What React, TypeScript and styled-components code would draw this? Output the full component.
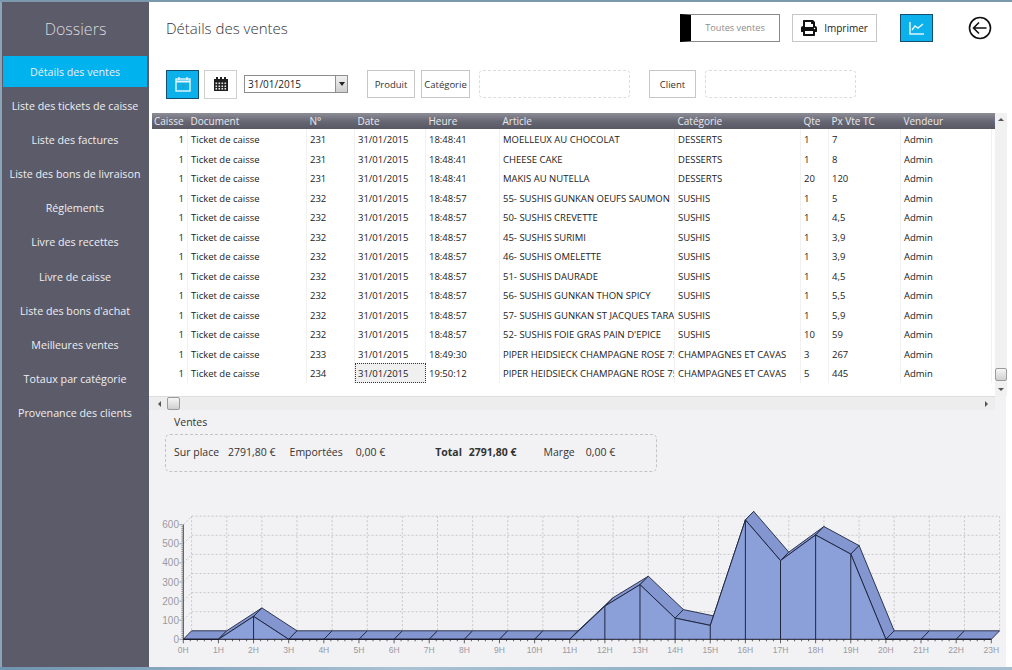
import { createGlobalStyle } from "styled-components";
import styled from "styled-components";
import { FaPrint } from "react-icons/fa";

const navItems = [
  "Détails des ventes",
  "Liste des tickets de caisse",
  "Liste des factures",
  "Liste des bons de livraison",
  "Réglements",
  "Livre des recettes",
  "Livre de caisse",
  "Liste des bons d'achat",
  "Meilleures ventes",
  "Totaux par catégorie",
  "Provenance des clients",
];

const columns = "36px 119px 48px 71px 74px 175px 126px 28px 72px 91px 3px";
const headers = ["Caisse", "Document", "N°", "Date", "Heure", "Article", "Catégorie", "Qte", "Px Vte TC", "Vendeur", "C"];

type Row = [string, string, string, string, string, string, string];

const rows: Row[] = [
  ["231", "18:48:41", "MOELLEUX AU CHOCOLAT", "DESSERTS", "1", "7", "Admin"],
  ["231", "18:48:41", "CHEESE CAKE", "DESSERTS", "1", "8", "Admin"],
  ["231", "18:48:41", "MAKIS AU NUTELLA", "DESSERTS", "20", "120", "Admin"],
  ["232", "18:48:57", "55- SUSHIS GUNKAN OEUFS SAUMON", "SUSHIS", "1", "5", "Admin"],
  ["232", "18:48:57", "50- SUSHIS CREVETTE", "SUSHIS", "1", "4,5", "Admin"],
  ["232", "18:48:57", "45- SUSHIS SURIMI", "SUSHIS", "1", "3,9", "Admin"],
  ["232", "18:48:57", "46- SUSHIS OMELETTE", "SUSHIS", "1", "3,9", "Admin"],
  ["232", "18:48:57", "51- SUSHIS DAURADE", "SUSHIS", "1", "4,5", "Admin"],
  ["232", "18:48:57", "56- SUSHIS GUNKAN THON SPICY", "SUSHIS", "1", "5,5", "Admin"],
  ["232", "18:48:57", "57- SUSHIS GUNKAN ST JACQUES TARAMA", "SUSHIS", "1", "5,9", "Admin"],
  ["232", "18:48:57", "52- SUSHIS FOIE GRAS PAIN D'EPICE", "SUSHIS", "10", "59", "Admin"],
  ["233", "18:49:30", "PIPER HEIDSIECK CHAMPAGNE ROSE 75", "CHAMPAGNES ET CAVAS", "3", "267", "Admin"],
  ["234", "19:50:12", "PIPER HEIDSIECK CHAMPAGNE ROSE 75", "CHAMPAGNES ET CAVAS", "5", "445", "Admin"],
];

const hourValues = [0, 0, 120, 0, 0, 0, 0, 0, 0, 0, 0, 0, 174, 286, 111, 73, 625, 412, 546, 446, 0, 0, 0, 0];

const GlobalStyle = createGlobalStyle`
  html, body {
    margin: 0;
    padding: 0;
    width: 1012px;
    height: 670px;
    overflow: hidden;
    background: #ffffff;
  }
  * {
    box-sizing: border-box;
  }
`;

const Window = styled.div`
  width: 1012px;
  height: 670px;
  display: flex;
  flex-direction: column;
  font-family: "Open Sans", "Noto Sans", sans-serif;
  background: #ffffff;
`;

const TopEdge = styled.div`
  height: 2px;
  background: #7c98ad;
`;

const BottomEdge = styled.div`
  height: 3px;
  background: linear-gradient(90deg, #6f93b0, #a9c2d4 40%, #8fb0c6 70%, #a6c0d2);
`;

const Body = styled.div`
  flex: 1;
  min-height: 0;
  display: flex;
  padding-left: 2px;
  background: #8aa4b8;
`;

const Sidebar = styled.nav`
  width: 147px;
  flex-shrink: 0;
  background: #5b5b69;
  display: flex;
  flex-direction: column;
  align-items: stretch;
`;

const SidebarTitle = styled.div`
  height: 54px;
  padding-top: 15px;
  text-align: center;
  color: #d9d9de;
  font-size: 16px;
  font-weight: 300;
  line-height: 24px;
`;

const NavItem = styled.div<{ $active?: boolean }>`
  height: 31px;
  flex-shrink: 0;
  display: flex;
  align-items: center;
  justify-content: center;
  margin: 0 2px 3.1px 1px;
  padding-top: 1px;
  font-size: 10.7px;
  white-space: nowrap;
  color: #eeeef2;
  background: ${(p) => (p.$active ? "#00b2ee" : "transparent")};
`;

const Main = styled.main`
  flex: 1;
  min-width: 0;
  display: flex;
  flex-direction: column;
  background: #ffffff;
`;

const Header = styled.header`
  height: 54px;
  display: flex;
  align-items: flex-start;
  padding: 12px 20px 0 17px;
`;

const PageTitle = styled.h1`
  margin: 0;
  flex: 1;
  padding-top: 1px;
  font-size: 15px;
  font-weight: 300;
  line-height: 27px;
  color: #333338;
`;

const ToggleButton = styled.div`
  width: 100px;
  height: 28px;
  margin-right: 12px;
  border: 1px solid #8a8a8a;
  border-left: 11px solid #000000;
  display: flex;
  align-items: center;
  justify-content: center;
  padding-bottom: 2px;
  font-size: 9.2px;
  color: #8e8e8e;
`;

const PrintButton = styled.div`
  width: 85px;
  height: 28px;
  margin-right: 23px;
  border: 1px solid #c6c6c6;
  display: flex;
  align-items: center;
  justify-content: center;
  gap: 7px;
  font-size: 10px;
  color: #222222;
`;

const ChartButton = styled.div`
  width: 33px;
  height: 28px;
  margin-right: 35px;
  background: #0cb0ea;
  border: 1px solid #16506e;
  display: flex;
  align-items: center;
  justify-content: center;
`;

const BackIcon = styled.svg`
  width: 24px;
  height: 24px;
  margin-top: 2px;
`;

const FilterRow = styled.div`
  height: 57px;
  display: flex;
  align-items: flex-start;
  padding: 14px 0 0 17px;
`;

const IconButton = styled.div<{ $active?: boolean }>`
  width: 33px;
  height: 29px;
  margin-right: 5px;
  display: flex;
  align-items: center;
  justify-content: center;
  background: ${(p) => (p.$active ? "#0cb0ea" : "#ffffff")};
  border: 1px solid ${(p) => (p.$active ? "#16506e" : "#cfcfcf")};
`;

const DateInput = styled.div`
  width: 104px;
  height: 18px;
  margin: 5px 19px 0 2px;
  border: 1px solid #8e8e8e;
  display: flex;
  align-items: center;
  justify-content: space-between;
  padding-left: 3px;
  font-size: 10px;
  color: #222222;
`;

const DropArrow = styled.span`
  width: 12px;
  height: 16px;
  border-left: 1px solid #8e8e8e;
  background: linear-gradient(#f0f0f0, #cfcfcf);
  display: flex;
  align-items: center;
  justify-content: center;
  &::after {
    content: "";
    border-left: 3px solid transparent;
    border-right: 3px solid transparent;
    border-top: 4px solid #222222;
  }
`;

const FilterButton = styled.div<{ $width: number }>`
  width: ${(p) => p.$width}px;
  height: 28px;
  margin-right: 6px;
  border: 1px solid #c6c6c6;
  display: flex;
  align-items: center;
  justify-content: center;
  font-size: 9.5px;
  color: #333333;
  white-space: nowrap;
`;

const FilterSlot = styled.div<{ $gap: number }>`
  width: 151px;
  height: 28px;
  margin-left: 3px;
  margin-right: ${(p) => p.$gap}px;
  border: 1px dashed #dcdcdc;
  border-radius: 4px;
`;

const TableArea = styled.div`
  height: 283px;
  display: flex;
  padding-left: 3px;
`;

const TableBox = styled.div`
  width: 843px;
  display: flex;
  flex-direction: column;
  overflow: hidden;
`;

const HeaderRow = styled.div`
  height: 16px;
  flex-shrink: 0;
  display: grid;
  grid-template-columns: ${columns};
  background: linear-gradient(#8d8d97, #666673 55%, #585864);
`;

const HeaderCell = styled.div`
  padding: 1px 0 0 2.5px;
  font-size: 10px;
  line-height: 15px;
  color: #e9e9ee;
  white-space: nowrap;
  overflow: hidden;
  &:first-child {
    padding-left: 2px;
  }
`;

const DataRow = styled.div`
  height: 19.5px;
  flex-shrink: 0;
  display: grid;
  grid-template-columns: ${columns};
`;

const Cell = styled.div<{ $right?: boolean; $focused?: boolean }>`
  padding: 1px 3px 0;
  font-size: 9.5px;
  line-height: 19px;
  color: #222222;
  white-space: nowrap;
  overflow: hidden;
  text-align: ${(p) => (p.$right ? "right" : "left")};
  border-right: 1px solid #f1f1f1;
  ${(p) => (p.$focused ? "background: #f0f0f0; outline: 1px dotted #333333; outline-offset: -1px;" : "")}
`;

const VScroll = styled.div`
  width: 12px;
  background: #f1f1f1;
  display: flex;
  flex-direction: column;
  align-items: center;
  justify-content: flex-end;
  padding-bottom: 15px;
  position: relative;
`;

const ScrollArrow = styled.span<{ $dir: "up" | "down" | "left" | "right" }>`
  width: 0;
  height: 0;
  flex-shrink: 0;
  ${(p) =>
    p.$dir === "up"
      ? "border-left: 3px solid transparent; border-right: 3px solid transparent; border-bottom: 3px solid #555;"
      : p.$dir === "down"
        ? "border-left: 3px solid transparent; border-right: 3px solid transparent; border-top: 3px solid #555;"
        : p.$dir === "left"
          ? "border-top: 3px solid transparent; border-bottom: 3px solid transparent; border-right: 3px solid #555;"
          : "border-top: 3px solid transparent; border-bottom: 3px solid transparent; border-left: 3px solid #555;"}
`;

const UpArrow = styled(ScrollArrow)`
  position: absolute;
  top: 5px;
  left: 3px;
`;

const DownArrow = styled(ScrollArrow)`
  position: absolute;
  bottom: 5px;
  left: 3px;
`;

const ScrollThumb = styled.div<{ $wide?: boolean }>`
  width: ${(p) => (p.$wide ? 13 : 12)}px;
  height: 13px;
  flex-shrink: 0;
  border: 1px solid #9b9b9b;
  border-radius: 2px;
  background: linear-gradient(#f6f6f6, #cfcfcf);
`;

const Lower = styled.section`
  flex: 1;
  min-height: 0;
  width: 857px;
  background: #f2f2f5;
  display: flex;
  flex-direction: column;
`;

const HScroll = styled.div`
  height: 14px;
  flex-shrink: 0;
  margin-right: 11px;
  background: #ededed;
  border-top: 1px solid #dddddd;
  display: flex;
  align-items: center;
  padding: 0 0 0 9px;
  gap: 6px;
`;

const HScrollEnd = styled.div`
  flex: 1;
  display: flex;
  justify-content: flex-end;
  padding-right: 7px;
`;

const SalesLabel = styled.div`
  font-size: 10.5px;
  line-height: 14px;
  color: #333333;
  padding: 5px 0 0 25px;
`;

const SalesBox = styled.div`
  width: 492px;
  height: 38px;
  margin: 5px 0 0 16px;
  border: 1px dashed #c4c4c4;
  border-radius: 5px;
  display: flex;
  align-items: center;
  padding: 0 0 2px 8px;
  font-size: 10.5px;
  color: #333333;
  white-space: nowrap;
`;

const SalesText = styled.span<{ $left: number; $bold?: boolean }>`
  margin-left: ${(p) => p.$left}px;
  font-weight: ${(p) => (p.$bold ? 700 : 400)};
`;

const ChartSvg = styled.svg`
  display: block;
  margin-top: 30px;
  width: 857px;
  height: 165px;
`;

// chart coordinates: x0 and baseline are relative to the svg
const X0 = 34.3;
const STEP = 35.13;
const BASE = 137.3;
const UNIT = 19.1 / 100;
const DX = 8.3;
const DY = 8.5;

const px = (h: number) => X0 + h * STEP;
const py = (v: number) => BASE - v * UNIT;

const SalesChart = () => {
  const front = hourValues.map((v, h) => `${px(h).toFixed(1)},${py(v).toFixed(1)}`);
  const back = hourValues.map((v, h) => `${(px(h) + DX).toFixed(1)},${(py(v) - DY).toFixed(1)}`);
  return (
    <ChartSvg viewBox="0 0 857 165">
      {[0, 1, 2, 3, 4, 5, 6].map((i) => (
        <g key={i}>
          <line
            x1={px(0)}
            y1={py(i * 100)}
            x2={px(0) + DX}
            y2={py(i * 100) - DY}
            stroke="#c8c8c8"
            strokeDasharray="2 2"
          />
          {i > 0 && (
            <line
              x1={px(0) + DX}
              y1={py(i * 100) - DY}
              x2={px(23) + DX}
              y2={py(i * 100) - DY}
              stroke="#c8c8c8"
              strokeDasharray="2 2"
            />
          )}
          <text x={30} y={py(i * 100) + 3.5} textAnchor="end" fontSize="10" fill="#9a9aa0" fontFamily="Liberation Sans">
            {i * 100}
          </text>
        </g>
      ))}
      {hourValues.map((_, h) => (
        <line key={h} x1={px(h) + DX} y1={py(600) - DY} x2={px(h) + DX} y2={BASE - DY} stroke="#c8c8c8" strokeDasharray="2 2" />
      ))}
      {/* top and side faces of the 3d area */}
      {hourValues.slice(0, -1).map((_, h) => (
        <polygon
          key={h}
          points={`${front[h]} ${front[h + 1]} ${back[h + 1]} ${back[h]}`}
          fill="#8496d0"
          stroke="#1f2740"
          strokeWidth="0.9"
          strokeLinejoin="round"
        />
      ))}
      <polygon points={`${px(0)},${BASE} ${front.join(" ")} ${px(23)},${BASE}`} fill="#8b9fd8" />
      <polyline points={front.join(" ")} fill="none" stroke="#1f2740" strokeWidth="1" />
      {hourValues.map((v, h) =>
        v > 0 ? <line key={h} x1={px(h)} y1={BASE} x2={px(h)} y2={py(v)} stroke="#1f2740" strokeWidth="1" /> : null
      )}
      <line x1={px(0)} y1={BASE} x2={px(23)} y2={BASE} stroke="#1a1a2a" />
      <line x1={px(0)} y1={py(600)} x2={px(0)} y2={BASE} stroke="#444" />
      {Array.from({ length: 61 }, (_, i) => (
        <line
          key={i}
          x1={px(0) - (i % 10 === 0 ? 4 : 2)}
          y1={BASE - i * 10 * UNIT}
          x2={px(0)}
          y2={BASE - i * 10 * UNIT}
          stroke="#666"
          strokeWidth="0.6"
        />
      ))}
      {Array.from({ length: 23 * 5 + 1 }, (_, i) => (
        <line
          key={i}
          x1={X0 + (i * STEP) / 5}
          y1={BASE}
          x2={X0 + (i * STEP) / 5}
          y2={BASE + (i % 5 === 0 ? 4 : 2)}
          stroke="#222"
          strokeWidth="0.7"
        />
      ))}
      {hourValues.map((_, h) => (
        <text key={h} x={px(h)} y={BASE + 14} textAnchor="middle" fontSize="8.5" fill="#9a9aa0" fontFamily="Liberation Sans">
          {h}H
        </text>
      ))}
    </ChartSvg>
  );
};

const CalendarDayIcon = () => (
  <svg width="18" height="17" viewBox="0 0 18 17" fill="none" stroke="#e6f7fd" strokeWidth="1.4">
    <rect x="2" y="3" width="14" height="12" />
    <line x1="2" y1="5.5" x2="16" y2="5.5" strokeWidth="2" />
    <line x1="5" y1="1" x2="5" y2="4" />
    <line x1="13" y1="1" x2="13" y2="4" />
    <path d="M8 9h2.4L9 13" strokeWidth="0.9" stroke="#4a8fb0" />
  </svg>
);

const CalendarMonthIcon = () => (
  <svg width="18" height="17" viewBox="0 0 18 17">
    <rect x="2" y="3" width="14" height="12" fill="#1f1f1f" />
    <rect x="4" y="1" width="2" height="4" fill="#1f1f1f" />
    <rect x="8" y="1" width="2" height="4" fill="#1f1f1f" />
    <rect x="12" y="1" width="2" height="4" fill="#1f1f1f" />
    {[3.5, 6.5, 9.5, 12.5].map((x) =>
      [6.5, 9.5, 12].map((y) => <rect key={`${x}-${y}`} x={x} y={y} width="1.6" height="1.6" fill="#e8e8e8" />)
    )}
  </svg>
);

const App = () => {
  return (
    <Window>
      <GlobalStyle />
      <TopEdge />
      <Body>
        <Sidebar>
          <SidebarTitle>Dossiers</SidebarTitle>
          {navItems.map((item, i) => (
            <NavItem key={item} $active={i === 0}>
              {item}
            </NavItem>
          ))}
        </Sidebar>
        <Main>
          <Header>
            <PageTitle>Détails des ventes</PageTitle>
            <ToggleButton>Toutes ventes</ToggleButton>
            <PrintButton>
              <FaPrint size={16} color="#111" />
              Imprimer
            </PrintButton>
            <ChartButton>
              <svg width="16" height="14" viewBox="0 0 16 14" fill="none" stroke="#dff5fd" strokeWidth="1.5">
                <path d="M1 1v12h14" />
                <path d="M3 9l3-4 3 2 5-4" />
              </svg>
            </ChartButton>
            <BackIcon viewBox="0 0 24 24" fill="none" stroke="#111" strokeWidth="1.6">
              <circle cx="12" cy="12" r="10.5" />
              <path d="M18.5 12H5.5M11 6.5L5.5 12l5.5 5.5" />
            </BackIcon>
          </Header>
          <FilterRow>
            <IconButton $active>
              <CalendarDayIcon />
            </IconButton>
            <IconButton>
              <CalendarMonthIcon />
            </IconButton>
            <DateInput>
              31/01/2015
              <DropArrow />
            </DateInput>
            <FilterButton $width={48}>Produit</FilterButton>
            <FilterButton $width={49}>Catégorie</FilterButton>
            <FilterSlot $gap={19} />
            <FilterButton $width={47}>Client</FilterButton>
            <FilterSlot $gap={0} />
          </FilterRow>
          <TableArea>
            <TableBox>
              <HeaderRow>
                {headers.map((h) => (
                  <HeaderCell key={h}>{h}</HeaderCell>
                ))}
              </HeaderRow>
              {rows.map((r, i) => (
                <DataRow key={i}>
                  <Cell $right>1</Cell>
                  <Cell>Ticket de caisse</Cell>
                  <Cell>{r[0]}</Cell>
                  <Cell $focused={i === rows.length - 1}>31/01/2015</Cell>
                  <Cell>{r[1]}</Cell>
                  <Cell>{r[2]}</Cell>
                  <Cell>{r[3]}</Cell>
                  <Cell>{r[4]}</Cell>
                  <Cell>{r[5]}</Cell>
                  <Cell>{r[6]}</Cell>
                </DataRow>
              ))}
            </TableBox>
            <VScroll>
              <UpArrow $dir="up" />
              <ScrollThumb />
              <DownArrow $dir="down" />
            </VScroll>
          </TableArea>
          <Lower>
            <HScroll>
              <ScrollArrow $dir="left" />
              <ScrollThumb $wide />
              <HScrollEnd>
                <ScrollArrow $dir="right" />
              </HScrollEnd>
            </HScroll>
            <SalesLabel>Ventes</SalesLabel>
            <SalesBox>
              <SalesText $left={0}>Sur place</SalesText>
              <SalesText $left={9}>2791,80 €</SalesText>
              <SalesText $left={14}>Emportées</SalesText>
              <SalesText $left={13}>0,00 €</SalesText>
              <SalesText $left={50} $bold>
                Total
              </SalesText>
              <SalesText $left={7} $bold>
                2791,80 €
              </SalesText>
              <SalesText $left={27}>Marge</SalesText>
              <SalesText $left={11}>0,00 €</SalesText>
            </SalesBox>
            <SalesChart />
          </Lower>
        </Main>
      </Body>
      <BottomEdge />
    </Window>
  );
};

export default App;
